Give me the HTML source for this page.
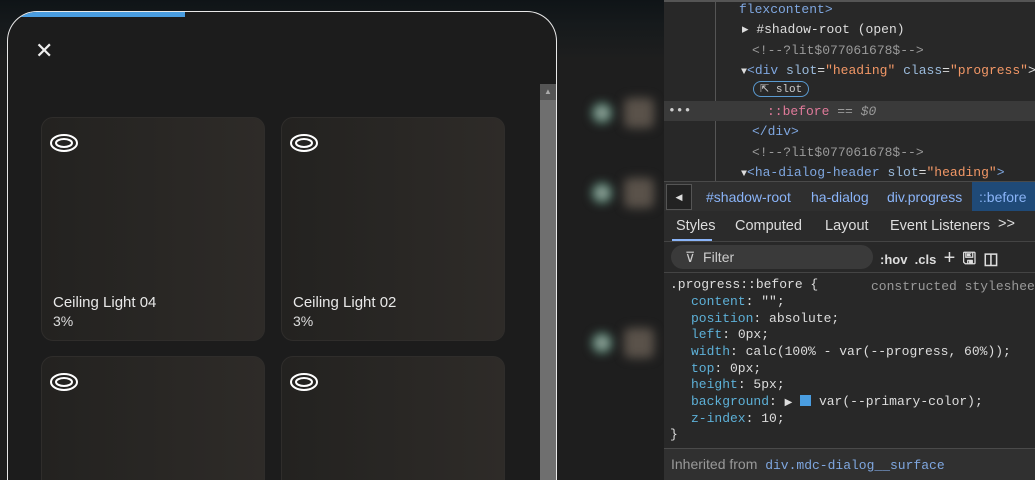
<!DOCTYPE html>
<html style="overflow:hidden;width:1035px;height:480px"><head><style>
*{margin:0;padding:0;box-sizing:border-box}
body{width:1035px;height:480px;overflow:hidden;background:#1b1c1d;position:relative;font-family:"Liberation Sans",sans-serif}
.bg{position:absolute;left:0;top:0;width:664px;height:480px;background:linear-gradient(#0f1417 0,#161a1c 25px,#1e1e1e 60px,#1e1e1e)}
.blob{position:absolute;border-radius:50%;filter:blur(5px)}
.dlg{position:absolute;left:7px;top:11px;width:550px;height:469px;background:#1c1c1c;border:1.5px solid #e8e8e8;border-bottom:none;border-radius:30px 30px 0 0;overflow:hidden}
.prog{position:absolute;left:0;top:0;width:177px;height:5px;background:#4a9de0}
.x{position:absolute;left:27px;top:26px;color:#eee;font-size:22px}
.sb{position:absolute;left:532px;top:72px;width:16px;height:400px;background:#6f6f6f}
.sbt{position:absolute;left:532px;top:72px;width:16px;height:16px;background:#555;color:#aaa;font-size:8px;text-align:center;line-height:16px}
.card{position:absolute;width:224px;height:224px;border-radius:12px;background:linear-gradient(90deg,#232220,#2e2b28);border:1px solid #2f2d2b}
.card svg{position:absolute;left:7px;top:15px}
.nm{position:absolute;left:11px;top:176px;color:#e8e8e8;font-size:15px}
.pc{position:absolute;left:11px;top:195px;color:#ddd;font-size:14px}
.dt{position:absolute;left:664px;top:0;width:371px;height:480px;background:#282828;font-family:"Liberation Mono",monospace;font-size:13px;color:#ddd}
.ln{position:absolute;white-space:pre}
.tag{color:#7fa7e0}.at{color:#9bbbdc}.av{color:#f29766}.cm{color:#9a9a9a}
.prop{color:#5db0d7}
</style></head><body>
<div class="bg"></div>
<div class="blob" style="left:592px;top:103px;width:20px;height:20px;background:radial-gradient(#c8a,#6a8 50%,#335)"></div>
<div class="blob" style="left:624px;top:98px;width:30px;height:30px;background:#5a524a;border-radius:6px"></div>
<div class="blob" style="left:592px;top:183px;width:20px;height:20px;background:radial-gradient(#c8a,#6a8 50%,#335)"></div>
<div class="blob" style="left:624px;top:178px;width:30px;height:30px;background:#5a524a;border-radius:6px"></div>
<div class="blob" style="left:592px;top:333px;width:20px;height:20px;background:radial-gradient(#c8a,#6a8 50%,#335)"></div>
<div class="blob" style="left:624px;top:328px;width:30px;height:30px;background:#5a524a;border-radius:6px"></div>
<div class="dlg">
<div class="prog"></div>
<div class="x">✕</div>
<div class="sb"></div><div class="sbt">▲</div>
<div class="card" style="left:33px;top:105px"><svg width="32" height="20"><ellipse cx="15" cy="10" rx="13" ry="8" fill="none" stroke="#fff" stroke-width="2"/><ellipse cx="15" cy="10" rx="8" ry="4" fill="none" stroke="#fff" stroke-width="2"/></svg><div class="nm">Ceiling Light 04</div><div class="pc">3%</div></div>
<div class="card" style="left:273px;top:105px"><svg width="32" height="20"><ellipse cx="15" cy="10" rx="13" ry="8" fill="none" stroke="#fff" stroke-width="2"/><ellipse cx="15" cy="10" rx="8" ry="4" fill="none" stroke="#fff" stroke-width="2"/></svg><div class="nm">Ceiling Light 02</div><div class="pc">3%</div></div>
<div class="card" style="left:33px;top:344px"><svg width="32" height="20"><ellipse cx="15" cy="10" rx="13" ry="8" fill="none" stroke="#fff" stroke-width="2"/><ellipse cx="15" cy="10" rx="8" ry="4" fill="none" stroke="#fff" stroke-width="2"/></svg></div>
<div class="card" style="left:273px;top:344px"><svg width="32" height="20"><ellipse cx="15" cy="10" rx="13" ry="8" fill="none" stroke="#fff" stroke-width="2"/><ellipse cx="15" cy="10" rx="8" ry="4" fill="none" stroke="#fff" stroke-width="2"/></svg></div>
</div>
<div class="dt">
<div style="position:absolute;left:0;top:0;width:371px;height:2px;background:#555"></div>
<div style="position:absolute;left:51px;top:0;width:1px;height:182px;background:#555"></div>
<div style="position:absolute;left:0;top:101px;width:371px;height:20px;background:#3a3a3a"></div>
<div class="ln" style="left:4px;top:103px;color:#ccc">•••</div>
<div class="ln tag" style="left:75px;top:2px">flexcontent&gt;</div>
<div class="ln" style="left:78px;top:22px">▸ #shadow-root (open)</div>
<div class="ln cm" style="left:88px;top:43px">&lt;!--?lit$077061678$--&gt;</div>
<div class="ln" style="left:77px;top:63px"><span style="font-size:10px">▼</span><span class="tag">&lt;div</span> <span class="at">slot</span>=<span class="av">"heading"</span> <span class="at">class</span>=<span class="av">"progress"</span>&gt;</div>
<div class="ln" style="left:89px;top:81px;border:1px solid #5a9ad0;border-radius:8px;padding:0 6px;font-size:11px;color:#ccc">⇱ slot</div>
<div class="ln" style="left:103px;top:104px"><span style="color:#e07a9a">::before</span> <span class="cm">== <i>$0</i></span></div>
<div class="ln tag" style="left:88px;top:124px">&lt;/div&gt;</div>
<div class="ln cm" style="left:88px;top:145px">&lt;!--?lit$077061678$--&gt;</div>
<div class="ln" style="left:77px;top:165px"><span style="font-size:10px">▼</span><span class="tag">&lt;ha-dialog-header</span> <span class="at">slot</span>=<span class="av">"heading"</span><span class="tag">&gt;</span></div>
<div style="position:absolute;left:0;top:181px;width:371px;height:30px;background:#2f2f2f;border-top:1px solid #4a4a4a;font-family:'Liberation Sans',sans-serif;font-size:14px;color:#8ab4f8">
<div style="position:absolute;left:2px;top:2px;width:26px;height:26px;border:1px solid #555;background:#222;color:#ddd;font-size:9px;text-align:center;line-height:24px">◀</div>
<span style="position:absolute;left:42px;top:7px">#shadow-root</span><span style="position:absolute;left:147px;top:7px">ha-dialog</span><span style="position:absolute;left:223px;top:7px">div.progress</span>
<div style="position:absolute;left:308px;top:0;width:63px;height:30px;background:#1f4a78;padding:7px 0 0 7px">::before</div></div>
<div style="position:absolute;left:0;top:211px;width:371px;height:31px;background:#2b2b2b;border-bottom:1px solid #444;font-family:'Liberation Sans',sans-serif;font-size:14.5px;color:#ddd">
<span style="position:absolute;left:12px;top:7px">Styles</span><span style="position:absolute;left:71px;top:7px">Computed</span><span style="position:absolute;left:161px;top:7px">Layout</span><span style="position:absolute;left:226px;top:7px">Event Listeners</span><span style="position:absolute;left:334px;top:5px">&gt;&gt;</span>
<div style="position:absolute;left:8px;top:28px;width:40px;height:2px;background:#8ab4f8"></div></div>
<div style="position:absolute;left:7px;top:245px;width:202px;height:24px;border-radius:12px;background:#3a3a3a;font-family:'Liberation Sans',sans-serif;font-size:14px;color:#ccc;padding:4px 0 0 14px">⊽ &nbsp;Filter</div>
<div class="ln" style="left:216px;top:247px;font-family:'Liberation Sans',sans-serif;font-weight:bold;font-size:13px">:hov &nbsp;.cls &nbsp;<span style="font-size:20px;font-weight:normal">+</span> &nbsp;<span style="font-size:16px">🖫</span> &nbsp;<span style="font-size:16px">◫</span></div>
<div style="position:absolute;left:0;top:272px;width:371px;height:1px;background:#444"></div>
<div class="ln" style="left:6px;top:277px">.progress::before {</div>
<div class="ln cm" style="left:207px;top:279px">constructed styleshee</div>
<div class="ln" style="left:27px;top:294px"><span class="prop">content</span>: "";</div>
<div class="ln" style="left:27px;top:311px"><span class="prop">position</span>: absolute;</div>
<div class="ln" style="left:27px;top:327px"><span class="prop">left</span>: 0px;</div>
<div class="ln" style="left:27px;top:344px"><span class="prop">width</span>: calc(100% - var(--progress, 60%));</div>
<div class="ln" style="left:27px;top:361px"><span class="prop">top</span>: 0px;</div>
<div class="ln" style="left:27px;top:377px"><span class="prop">height</span>: 5px;</div>
<div class="ln" style="left:27px;top:394px"><span class="prop">background</span>: <span style="font-size:10px">▶</span> <span style="display:inline-block;width:11px;height:11px;background:#4a9de0;vertical-align:-1px"></span> var(--primary-color);</div>
<div class="ln" style="left:27px;top:411px"><span class="prop">z-index</span>: 10;</div>
<div class="ln" style="left:6px;top:427px">}</div>
<div style="position:absolute;left:0;top:448px;width:371px;height:32px;background:#303030;border-top:1px solid #4a4a4a"></div>
<div class="ln" style="left:7px;top:456px"><span style="font-family:'Liberation Sans',sans-serif;color:#999;font-size:14px">Inherited from</span> <span class="tag">div.mdc-dialog__surface</span></div>
</div>
</body></html>
